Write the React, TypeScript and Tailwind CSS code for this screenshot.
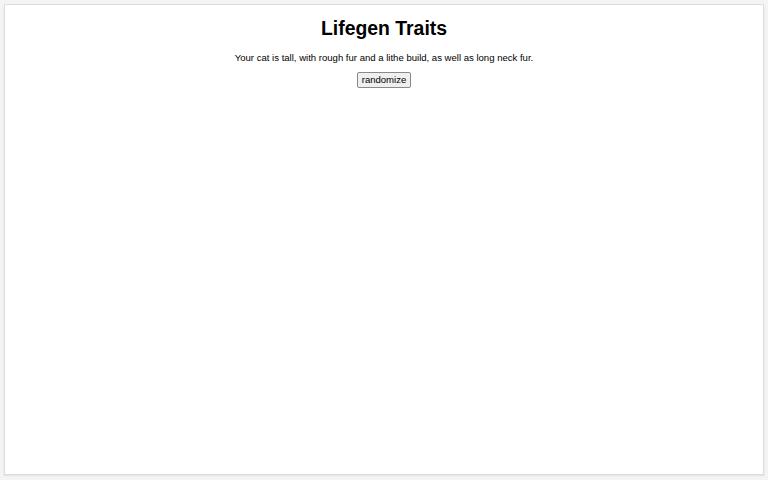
import { useState } from "react";

const heights = ["tall", "short", "average height"];
const furs = ["rough", "soft", "silky", "wiry"];
const builds = ["lithe", "stocky", "muscular", "slender"];
const extras = ["long neck fur", "ear tufts", "a fluffy tail", "toe beans"];

const pick = (list: string[]) => list[Math.floor(Math.random() * list.length)];

export default function App() {
  const [traits, setTraits] = useState({
    height: "tall",
    fur: "rough",
    build: "lithe",
    extra: "long neck fur",
  });

  const randomize = () =>
    setTraits({
      height: pick(heights),
      fur: pick(furs),
      build: pick(builds),
      extra: pick(extras),
    });

  return (
    <div className="w-full h-screen bg-[#f4f4f4] pt-[4px] px-[4px] pb-[5px] font-['Liberation_Sans',Arial,sans-serif] text-black">
      <div className="h-full bg-white border border-[#dcdcdc] shadow-[0_1px_2px_rgba(0,0,0,0.08)] flex flex-col items-center pt-[11px]">
        <h1 className="text-[19.4px] leading-[24px] font-bold">Lifegen Traits</h1>
        <p className="text-[9.55px] leading-[12px] mt-[12px]">
          Your cat is {traits.height}, with {traits.fur} fur and a {traits.build} build, as well as{" "}
          {traits.extra}.
        </p>
        <button
          onClick={randomize}
          className="mt-[8px] text-[9.55px] leading-[12px] px-[4px] py-[1px] bg-[#efefef] border border-[#8a8a8a] rounded-[2px]"
        >
          randomize
        </button>
      </div>
    </div>
  );
}
